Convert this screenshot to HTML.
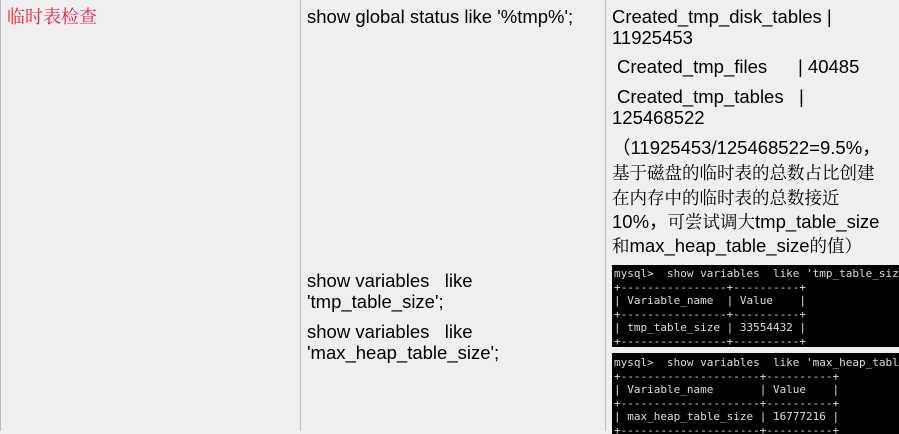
<!DOCTYPE html>
<html><head><style>
body{margin:0;width:899px;height:431px;background:#efefef;position:relative;overflow:hidden;font-family:"Liberation Sans","Noto Sans CJK SC",sans-serif;font-size:18.5px;color:#000}
.v{position:absolute;top:0;height:431px;width:1px;background:#bdbdbd}
.t{position:absolute;white-space:nowrap;line-height:21px}
.s{font-family:"Noto Serif CJK SC","Liberation Serif",serif;font-size:17.5px}
.term{position:absolute;background:#000;color:#ddd;font-family:"DejaVu Sans Mono","Liberation Mono",monospace;font-size:11px;line-height:13.5px;white-space:pre;overflow:hidden;padding-left:2px}
</style></head><body>
<div class="v" style="left:0"></div>
<div class="v" style="left:300px"></div>
<div class="v" style="left:605px"></div>
<div class="t s" style="left:7px;top:6px;color:#f01f3a;font-size:18px">临时表检查</div>
<div class="t" style="left:307px;top:6px">show global status like '%tmp%';</div>
<div class="t" style="left:612px;top:6px">Created_tmp_disk_tables |</div>
<div class="t" style="left:612px;top:27px">11925453</div>
<div class="t" style="left:617px;top:56px">Created_tmp_files &nbsp;&nbsp;&nbsp;&nbsp;&nbsp;| 40485</div>
<div class="t" style="left:617px;top:86px">Created_tmp_tables &nbsp;&nbsp;|</div>
<div class="t" style="left:612px;top:107px">125468522</div>
<div class="t" style="left:612px;top:137px">（11925453/125468522=9.5%，</div>
<div class="t s" style="left:612px;top:162px">基于磁盘的临时表的总数占比创建</div>
<div class="t s" style="left:612px;top:187px">在内存中的临时表的总数接近</div>
<div class="t" style="left:612px;top:211px">10%，<span class="s">可尝试调大</span>tmp_table_size</div>
<div class="t" style="left:612px;top:235px"><span class="s">和</span>max_heap_table_size<span class="s">的值）</span></div>
<div class="t" style="left:307px;top:270px">show variables &nbsp;&nbsp;like</div>
<div class="t" style="left:307px;top:291px">'tmp_table_size';</div>
<div class="t" style="left:307px;top:321px">show variables &nbsp;&nbsp;like</div>
<div class="t" style="left:307px;top:342px">'max_heap_table_size';</div>
<div class="term" style="left:612px;top:265px;width:285px;height:80px;padding-top:2px">mysql>  show variables  like 'tmp_table_size';
+----------------+----------+
| Variable_name  | Value    |
+----------------+----------+
| tmp_table_size | 33554432 |
+----------------+----------+</div>
<div class="term" style="left:612px;top:353px;width:285px;height:78px;padding-top:3px">mysql>  show variables  like 'max_heap_table_size';
+---------------------+----------+
| Variable_name       | Value    |
+---------------------+----------+
| max_heap_table_size | 16777216 |
+---------------------+----------+</div>
</body></html>
